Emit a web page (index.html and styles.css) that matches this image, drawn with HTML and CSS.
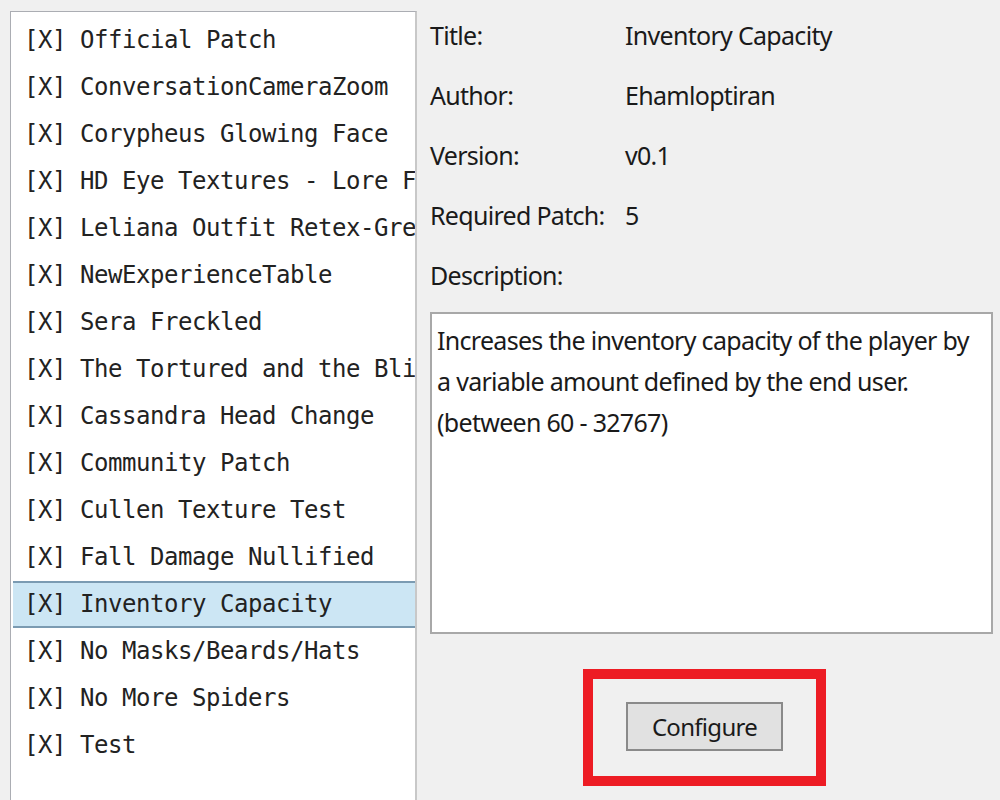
FILE: index.html
```html
<!DOCTYPE html>
<html lang="en">
<head>
    <meta charset="UTF-8">
    <title>Mod Manager</title>
    <link rel="stylesheet" href="styles.css">
</head>
<body>
    <div class="window">
        <ul class="mod-list">
            <li>[X] Official Patch</li>
            <li>[X] ConversationCameraZoom</li>
            <li>[X] Corypheus Glowing Face</li>
            <li>[X] HD Eye Textures - Lore Friendly</li>
            <li>[X] Leliana Outfit Retex-Green</li>
            <li>[X] NewExperienceTable</li>
            <li>[X] Sera Freckled</li>
            <li>[X] The Tortured and the Blind</li>
            <li>[X] Cassandra Head Change</li>
            <li>[X] Community Patch</li>
            <li>[X] Cullen Texture Test</li>
            <li>[X] Fall Damage Nullified</li>
            <li class="selected">[X] Inventory Capacity</li>
            <li>[X] No Masks/Beards/Hats</li>
            <li>[X] No More Spiders</li>
            <li>[X] Test</li>
        </ul>

        <div class="details">
            <div class="fields">
                <span class="label">Title:</span>
                <span class="value">Inventory Capacity</span>
                <span class="label">Author:</span>
                <span class="value">Ehamloptiran</span>
                <span class="label">Version:</span>
                <span class="value">v0.1</span>
                <span class="label">Required Patch:</span>
                <span class="value">5</span>
                <span class="label">Description:</span>
                <span class="value"></span>
            </div>
            <div class="description">Increases the inventory capacity of the player by a variable amount defined by the end user. (between 60 - 32767)</div>
            <div class="highlight">
                <button class="configure">Configure</button>
            </div>
        </div>
    </div>
</body>
</html>
```

FILE: styles.css
```css
body {
    margin: 0;
    height: 800px;
    overflow: hidden;
    background-color: #f0f0f0;
    font-family: "Noto Sans", "Open Sans", sans-serif;
    color: #1a1a1a;
}
.window {
    display: grid;
    grid-template-columns: 407px 1fr;
    column-gap: 13px;
    padding: 11px 7px 0 10px;
}
.mod-list {
    list-style: none;
    margin: 0;
    padding: 5px 0 0 2px;
    height: 820px;
    background-color: white;
    border: 1px solid #abadb3;
    border-right: 2px solid #c8c8c8;
    overflow: hidden;
    font-family: "DejaVu Sans Mono", monospace;
    font-size: 24px;
    letter-spacing: -0.45px;
    color: #222;
}
.mod-list li {
    height: 47px;
    line-height: 47px;
    padding-left: 11px;
    white-space: nowrap;
    overflow: hidden;
    box-sizing: border-box;
}
.mod-list li.selected {
    background-color: #cce6f4;
    border-top: 2px solid #7b9bb2;
    border-bottom: 2px solid #7b9bb2;
    line-height: 43px;
}
.details {
    margin-top: -6px;
}
.fields {
    display: grid;
    grid-template-columns: 195px 1fr;
    grid-auto-rows: 60px;
    align-items: center;
    font-size: 25px;
    letter-spacing: -0.7px;
}
.description {
    margin-top: 7px;
    height: 306px;
    padding: 6px 5px;
    background-color: white;
    border: 2px solid #a8a8a8;
    font-size: 25px;
    line-height: 41px;
    letter-spacing: -0.7px;
}
.highlight {
    width: 157px;
    margin: 35px 0 0 153px;
    padding: 23px 33px 25px;
    border: 10px solid #ed1c24;
}
.configure {
    width: 157px;
    height: 49px;
    background-color: #e1e1e1;
    border: 2px solid #8a8a8a;
    font-family: "Noto Sans", "Open Sans", sans-serif;
    font-size: 24px;
    letter-spacing: -0.7px;
    color: #1a1a1a;
    padding: 0;
}
```
